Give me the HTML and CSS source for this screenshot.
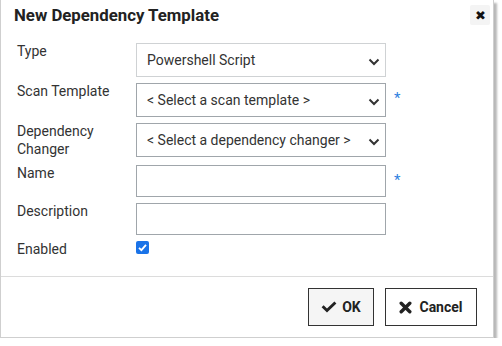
FILE: index.html
```html
<!DOCTYPE html>
<html>
<head>
<meta charset="utf-8">
<link rel="stylesheet" href="styles.css">
</head>
<body>
<div class="dialog">
  <div class="header">
    <div class="title">New Dependency Template</div>
    <div class="close">&#x2716;</div>
  </div>
  <div class="body">
    <div class="label">Type</div>
    <div class="field select light"><span>Powershell Script</span><svg class="chev" width="12" height="8" viewBox="0 0 12 8"><path d="M1.5 1.5 L6 6 L10.5 1.5" fill="none" stroke="#333" stroke-width="2"/></svg></div>
    <div class="req"></div>

    <div class="label">Scan Template</div>
    <div class="field select"><span>&lt; Select a scan template &gt;</span><svg class="chev" width="12" height="8" viewBox="0 0 12 8"><path d="M1.5 1.5 L6 6 L10.5 1.5" fill="none" stroke="#333" stroke-width="2"/></svg></div>
    <div class="req">*</div>

    <div class="label two">Dependency<br>Changer</div>
    <div class="field select"><span>&lt; Select a dependency changer &gt;</span><svg class="chev" width="12" height="8" viewBox="0 0 12 8"><path d="M1.5 1.5 L6 6 L10.5 1.5" fill="none" stroke="#333" stroke-width="2"/></svg></div>
    <div class="req"></div>

    <div class="label">Name</div>
    <div class="field input"></div>
    <div class="req">*</div>

    <div class="label">Description</div>
    <div class="field input"></div>
    <div class="req"></div>

    <div class="label">Enabled</div>
    <div class="check"><svg width="13" height="13" viewBox="0 0 13 13"><rect x="0" y="0" width="13" height="13" rx="2" fill="#1a73e8"/><path d="M3 6.8 L5.4 9.2 L10 3.8" fill="none" stroke="#fff" stroke-width="1.8"/></svg></div>
    <div class="req"></div>
  </div>
  <div class="footer">
    <div class="btn ok"><svg width="16" height="12" viewBox="0 0 16 12"><path d="M0.6 6.2 L2.6 4.2 L6 7.4 L13.4 0.4 L15.4 2.4 L6 11.4 Z" fill="#222"/></svg><span>OK</span></div>
    <div class="btn cancel"><svg width="13" height="13" viewBox="0 0 13 13"><path d="M2.2 2.2 L10.8 10.8 M10.8 2.2 L2.2 10.8" stroke="#222" stroke-width="3.4" stroke-linecap="round"/></svg><span>Cancel</span></div>
  </div>
</div>
</body>
</html>
```
FILE: styles.css
```css
html, body {
  margin: 0;
  padding: 0;
  background: #fff;
  font-family: Roboto, "Liberation Sans", sans-serif;
  color: #333;
}
.dialog {
  width: 492px;
  height: 337px;
  border: 1px solid #cfcfcf;
  border-top: none;
  box-shadow: 3px 3px 2px rgba(0,0,0,0.28);
  display: flex;
  flex-direction: column;
  background: #fff;
}
.header {
  height: 32px;
  display: flex;
  align-items: center;
  justify-content: space-between;
  padding: 0 3px 0 13px;
}
.title {
  font-weight: bold;
  font-size: 16.8px;
  color: #222;
  margin-top: -2px;
}
.close {
  width: 20px;
  height: 20px;
  background: #f4f4f4;
  border-radius: 2px;
  display: flex;
  align-items: center;
  justify-content: center;
  font-size: 13px;
  color: #111;
  margin-top: -2px;
}
.body {
  display: grid;
  grid-template-columns: 119px 250px 20px;
  grid-auto-rows: auto;
  row-gap: 6px;
  padding: 11px 0 0 16px;
  flex: 1;
  align-content: start;
}
.label {
  font-size: 14px;
  line-height: 18px;
  margin-top: -1px;
}
.label.two { margin-bottom: 1px; }
.field {
  box-sizing: border-box;
  border: 1px solid #a0a6ab;
  position: relative;
}
.select {
  height: 34px;
  display: flex;
  align-items: center;
  padding-left: 10px;
  font-size: 14px;
  color: #333;
}
.select.light { border-color: #cfd2d4; }
.chev {
  position: absolute;
  right: 5px;
  top: 14px;
}
.input {
  height: 32px;
}
.req {
  color: #2f7fe0;
  font-size: 15px;
  padding-left: 8px;
  line-height: 18px;
  padding-top: 6px;
}
.check {
  height: 18px;
}
.check svg { display: block; margin-top: 0px; }
.footer {
  border-top: 1px solid #dcdcdc;
  height: 60px;
  display: flex;
  justify-content: flex-end;
  align-items: center;
  gap: 11px;
  padding-right: 16px;
}
.btn {
  box-sizing: border-box;
  height: 38px;
  border: 1px solid #333;
  display: flex;
  align-items: center;
  justify-content: center;
  gap: 5px;
  font-size: 14px;
  font-weight: bold;
  color: #222;
}
.ok { width: 66px; background: #f5f5f5; }
.cancel { width: 92px; background: #fff; gap: 7px; }
```
